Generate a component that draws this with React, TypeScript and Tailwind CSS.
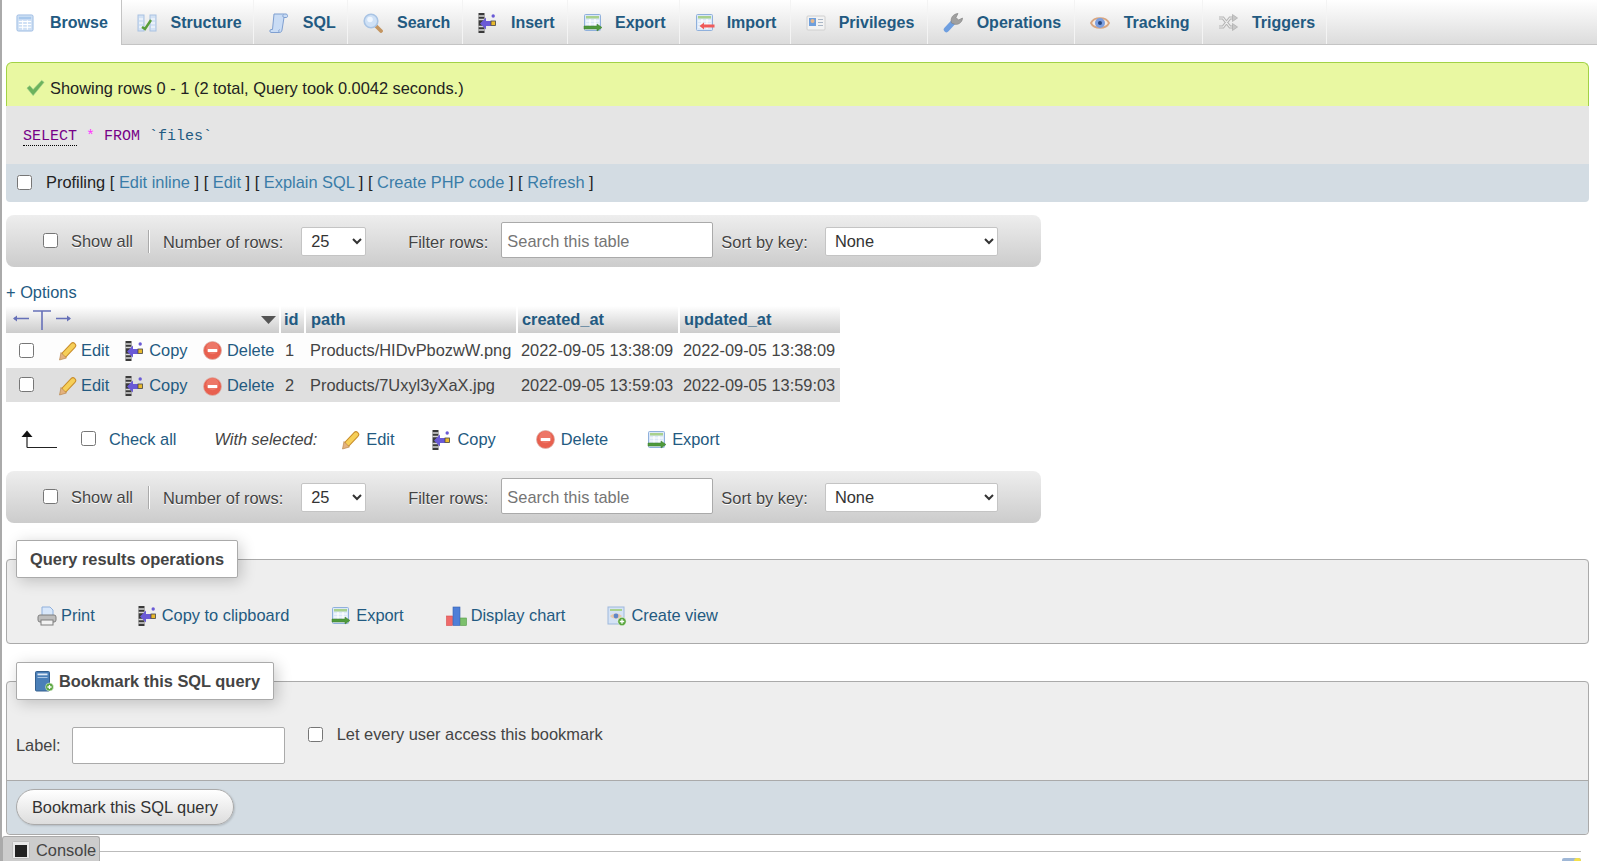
import React from "react";

type IP = { className?: string };

const TableBase = () => (
  <>
    <rect x="1.5" y="1.5" width="16" height="16" rx="1" fill="#dbe8f8" stroke="#8fb0dc" />
    <rect x="3" y="3" width="13" height="2.5" fill="#a9d18e" />
    <path d="M3 8h13M3 11h13M3 14h13M7 6v10M12 6v10" stroke="#fff" strokeWidth="1.2" />
  </>
);
const BrowseIcon = ({ className }: IP) => (
  <svg viewBox="0 0 19 19" className={className}>
    <rect x="1" y="1" width="17" height="17" rx="1.5" fill="#cfe0f5" stroke="#9dbbe2" />
    <rect x="3" y="3" width="13" height="2.5" fill="#a8c8ec" />
    <path d="M3 8h13M3 11h13M3 14h13M7 6.5v10M12 6.5v10" stroke="#fff" strokeWidth="1.1" />
  </svg>
);
const StructureIcon = ({ className }: IP) => (
  <svg viewBox="0 0 20 20" className={className}>
    <rect x="1" y="2" width="6" height="16" fill="#d3e2f4" stroke="#a9c2e2" />
    <rect x="13" y="2" width="6" height="16" fill="#d3e2f4" stroke="#a9c2e2" />
    <path d="M2 6h4M2 10h4M2 14h4M14 6h4M14 10h4M14 14h4" stroke="#fff" />
    <path d="M5 14l3 2 6-9" fill="none" stroke="#5a9e3a" strokeWidth="2.4" />
  </svg>
);
const SqlIcon = ({ className }: IP) => (
  <svg viewBox="0 0 20 20" className={className}>
    <path d="M5 1h12c2 0 2 3.500.5 3.500H15L13 17c-.3 1.500-1 2.500-2.500 2.500H2c-1.500 0-1.500-3 0-3h1.500z" fill="#c9dcf5" stroke="#7f9fd0" />
    <path d="M14.500 1.500c-1 1-1 2.500.5 3M10.500 16.500c-1 .8-1 2 0 3" fill="none" stroke="#7f9fd0" />
  </svg>
);
const SearchIcon = ({ className }: IP) => (
  <svg viewBox="0 0 20 20" className={className}>
    <path d="M12 12l6 6" stroke="#c49560" strokeWidth="3.800" strokeLinecap="round" />
    <circle cx="8" cy="8" r="6.800" fill="#cfe1f6" stroke="#a9c4e4" strokeWidth="1.600" />
    <circle cx="7" cy="6.500" r="2.800" fill="#f0f7ff" />
  </svg>
);
const CopyIcon = ({ className }: IP) => (
  <svg viewBox="0 0 18 20" className={className}>
    <rect x="0.500" y="0" width="6" height="20" fill="#3a3a3a" />
    <path d="M0.500 3h6M0.500 6.500h6M0.500 13.500h6M0.500 17h6" stroke="#d6d6d6" strokeWidth="1.300" />
    <path d="M2 10.500l6-6v3.500h5v5H8v3.500z" fill="#6a5ad6" />
    <rect x="13" y="8" width="4.500" height="4.500" fill="#e9b92c" stroke="#444" strokeWidth=".8" />
    <circle cx="15.200" cy="3" r="1.700" fill="#6a5ad6" />
  </svg>
);
const ExportIcon = ({ className }: IP) => (
  <svg viewBox="0 0 20 20" className={className}>
    <TableBase />
    <path d="M1 13h13v-2l5 3.500-5 3.500v-2H1z" fill="#4f9a3c" stroke="#3c7d2c" strokeWidth=".5" />
  </svg>
);
const ImportIcon = ({ className }: IP) => (
  <svg viewBox="0 0 20 20" className={className}>
    <TableBase />
    <path d="M19.500 11.500H9v-2l-4.500 3.500L9 16.500v-2h10.500z" fill="#ef5b5b" />
  </svg>
);
const PrivilegesIcon = ({ className }: IP) => (
  <svg viewBox="0 0 20 20" className={className}>
    <rect x="1" y="3" width="18" height="14" rx="1" fill="#f3f3f3" stroke="#d0d0d0" />
    <rect x="3" y="5" width="7" height="8" fill="#6f9fdc" />
    <circle cx="6.500" cy="8" r="2" fill="#e8b98c" />
    <path d="M12 6.500h5M12 9.500h5M12 12.500h5" stroke="#a9b6c6" strokeWidth="1.200" />
  </svg>
);
const OperationsIcon = ({ className }: IP) => (
  <svg viewBox="0 0 20 20" className={className}>
    <path d="M3.500 16.500L10 9.500" stroke="#6f9fe0" strokeWidth="5.500" strokeLinecap="round" />
    <path d="M8.500 10C7 5 10 1 15 .5L13 4.500 15.500 7 19.500 5C19.500 10 14 12.500 11 11z" fill="#a0a0a0" stroke="#808080" strokeWidth=".6" />
  </svg>
);
const EyeIcon = ({ className }: IP) => (
  <svg viewBox="0 0 20 20" className={className}>
    <path d="M1 10C4 3.500 16 3.500 19 10 16 16.500 4 16.500 1 10z" fill="#f8ebe0" stroke="#d9a67f" strokeWidth="1.800" />
    <circle cx="10" cy="10" r="5" fill="#7c9fe0" />
    <circle cx="10" cy="10" r="2" fill="#27457c" />
  </svg>
);
const TriggersIcon = ({ className }: IP) => (
  <svg viewBox="0 0 20 20" className={className}>
    <path d="M1 5h4l7 9h3M1 14h4l7-9h3" fill="none" stroke="#b4b4b4" strokeWidth="3.200" />
    <path d="M1 5h4l7 9h3M1 14h4l7-9h3" fill="none" stroke="#efefef" strokeWidth="1.200" />
    <path d="M14.500 1.500l5 3.500-5 3.500zM14.500 10.500l5 3.500-5 3.500z" fill="#c8c8c8" stroke="#a4a4a4" strokeWidth=".6" />
  </svg>
);
const EditIcon = ({ className }: IP) => (
  <svg viewBox="0 0 20 20" className={className}>
    <path d="M6.500 13.500L15 4.500" stroke="#c98e2c" strokeWidth="6.400" strokeLinecap="round" />
    <path d="M6.500 13.500L15 4.500" stroke="#f6cf58" strokeWidth="4.400" strokeLinecap="round" />
    <path d="M1.500 19L3 11.500 8.500 17z" fill="#e3b27f" stroke="#b27c3c" strokeWidth=".6" />
  </svg>
);
const DeleteIcon = ({ className }: IP) => (
  <svg viewBox="0 0 20 20" className={className}>
    <circle cx="10" cy="10" r="9.500" fill="#e8604f" stroke="#dcb4ac" strokeWidth=".8" />
    <circle cx="10" cy="7.500" r="6.500" fill="#f08a7c" opacity=".55" />
    <rect x="5" y="8.300" width="10" height="3.400" rx=".5" fill="#fff" />
  </svg>
);
const CheckIcon = ({ className }: IP) => (
  <svg viewBox="0 0 20 18" className={className}>
    <path d="M1 9l3-2.500 3.500 4L16.500 1 19 3 7.500 17z" fill="#6cb35c" stroke="#93c888" strokeWidth=".6" />
  </svg>
);
const PrintIcon = ({ className }: IP) => (
  <svg viewBox="0 0 20 20" className={className}>
    <path d="M5 1h8l3 3v6H5z" fill="#d8e7fa" stroke="#8fb0dc" />
    <rect x="1" y="9" width="18" height="7" rx="2" fill="#bdbdbd" stroke="#7f7f7f" />
    <rect x="4" y="14" width="12" height="5" fill="#f2f2f2" stroke="#7f7f7f" />
  </svg>
);
const ChartIcon = ({ className }: IP) => (
  <svg viewBox="0 0 21 20" className={className}>
    <rect x="0.500" y="10" width="6" height="9.500" fill="#ef6a6a" stroke="#d84c4c" strokeWidth=".6" />
    <rect x="7" y="1" width="7" height="18.500" fill="#4e7fd8" stroke="#355fb0" strokeWidth=".6" />
    <rect x="14.500" y="12" width="6" height="7.500" fill="#7cc06c" stroke="#549a46" strokeWidth=".6" />
  </svg>
);
const ViewIcon = ({ className }: IP) => (
  <svg viewBox="0 0 20 20" className={className}>
    <rect x="1" y="1" width="16" height="17" fill="#d5e3f5" stroke="#9db8dc" />
    <rect x="3" y="3" width="12" height="2" fill="#a9d18e" />
    <path d="M3 10c3-3.500 9-3.500 12 0-3 3.500-9 3.500-12 0z" fill="#e6c9ac" />
    <circle cx="9" cy="10" r="2.400" fill="#5f86c8" />
    <circle cx="15" cy="15.500" r="4.200" fill="#5aa63f" stroke="#fff" strokeWidth=".5" />
    <path d="M12.800 15.500h4.400M15 13.300v4.400" stroke="#fff" strokeWidth="1.300" />
  </svg>
);
const BookmarkIcon = ({ className }: IP) => (
  <svg viewBox="0 0 19 21" className={className}>
    <rect x="0.500" y="0.500" width="14" height="19.500" rx="1" fill="#4a7fb8" stroke="#35608f" />
    <rect x="2.500" y="2.500" width="10" height="1.800" fill="#dfeaf6" />
    <rect x="2.500" y="6" width="10" height="1" fill="#a9c6e4" />
    <circle cx="14.500" cy="16" r="4" fill="#5aa63f" stroke="#fff" strokeWidth=".5" />
    <path d="M12.400 16h4.200M14.500 13.900v4.200" stroke="#fff" strokeWidth="1.300" />
  </svg>
);
const ConsoleIcon = ({ className }: IP) => (
  <svg viewBox="0 0 18 18" className={className}>
    <rect x="0.500" y="0.500" width="17" height="17" rx="1" fill="#e9e9e9" stroke="#bdbdbd" />
    <rect x="3" y="4" width="12" height="12" fill="#222" />
  </svg>
);
const ArrowUpIcon = ({ className }: IP) => (
  <svg viewBox="0 0 36 18" className={className}>
    <path d="M6 17.500V5M6 17.500h30" fill="none" stroke="#222" strokeWidth="1.200" />
    <path d="M0.500 7L6 0.500 11.500 7z" fill="#111" />
  </svg>
);
const ColumnsIcon = ({ className }: IP) => (
  <svg viewBox="0 0 58 20" className={className}>
    <path d="M1 8.500h15M43 8.500h14M20 1h18M29 1v19" fill="none" stroke="#6670b8" strokeWidth="1.600" />
    <path d="M0 8.500L4 5.500v6zM58 8.500l-4-3v6z" fill="#6670b8" />
  </svg>
);

const tabs = [
  { n: "Browse", I: BrowseIcon, c: "w-[18px] h-[18px]", w: "w-[119.5px]", g: "ml-[14px]" },
  { n: "Structure", I: StructureIcon, c: "w-[20px] h-[20px]", w: "w-[132.3px]", g: "ml-[14px]" },
  { n: "SQL", I: SqlIcon, c: "w-[20px] h-[20px]", w: "w-[94.2px]", g: "ml-[14px]" },
  { n: "Search", I: SearchIcon, c: "w-[20px] h-[20px]", w: "w-[115px]", g: "ml-[14px]" },
  { n: "Insert", I: CopyIcon, c: "w-[18px] h-[20px]", w: "w-[105px]", g: "ml-[13px]" },
  { n: "Export", I: ExportIcon, c: "w-[20px] h-[20px]", w: "w-[111.7px]", g: "ml-[12px]" },
  { n: "Import", I: ImportIcon, c: "w-[20px] h-[20px]", w: "w-[111px]", g: "ml-[12px]" },
  { n: "Privileges", I: PrivilegesIcon, c: "w-[20px] h-[20px]", w: "w-[137px]", g: "ml-[13px]" },
  { n: "Operations", I: OperationsIcon, c: "w-[20px] h-[20px]", w: "w-[147px]", g: "ml-[14px]" },
  { n: "Tracking", I: EyeIcon, c: "w-[20px] h-[20px]", w: "w-[128.3px]", g: "ml-[14px]" },
  { n: "Triggers", I: TriggersIcon, c: "w-[20px] h-[20px]", w: "w-[124.5px]", g: "ml-[14px]" },
];

const TabBar = () => (
  <div className="flex h-[45px] border-b border-[#c4c4c4] bg-gradient-to-b from-[#ffffff] to-[#dcdcdc] text-[16px]">
    {tabs.map((t, i) => (
      <div
        key={t.n}
        className={
          (i === 0
            ? "flex h-[45px] items-center border-r border-[#c4c4c4] bg-white pl-[14px] font-bold text-[#235a81] "
            : "flex items-center border-r border-r-[#f4f4f4] pl-[15px] pt-[1px] font-bold text-[#235a81] ") + t.w
        }
      >
        <span className="flex w-[20px] items-center justify-start">
          <t.I className={t.c} />
        </span>
        <span className={t.g}>{t.n}</span>
      </div>
    ))}
  </div>
);

const Nav = () => (
  <div className="flex h-[52px] w-[1035px] items-center rounded-[8px] bg-gradient-to-b from-[#eeeeee] to-[#cccccc] pl-[37px] [text-shadow:0_1px_0_#fff]">
    <input type="checkbox" className="h-[15px] w-[15px] -translate-y-[1px]" />
    <span className="ml-[13px]">Show all</span>
    <span className="ml-[15px] h-[23px] w-[2px] border-r border-r-white bg-[#aaa]" />
    <span className="ml-[13px] translate-y-[1px]">Number of rows:</span>
    <select className="ml-[18px] h-[29px] w-[65px] rounded-[2px] border border-[#c4c4c4] bg-white pl-[5px] text-[#333]">
      <option>25</option>
    </select>
    <span className="ml-[42px] translate-y-[1px]">Filter rows:</span>
    <input
      placeholder="Search this table"
      className="ml-[13px] h-[36px] w-[212px] -translate-y-[1px] rounded-[2px] border border-[#aaa] bg-white px-[5px] pt-[2px] placeholder:text-[#757575]"
    />
    <span className="ml-[8px] translate-y-[1px]">Sort by key:</span>
    <select className="ml-[17px] h-[29px] w-[173px] rounded-[2px] border border-[#c4c4c4] bg-white pl-[5px] text-[#333]">
      <option>None</option>
    </select>
  </div>
);

const Row = ({ n, path, ts, alt }: { n: string; path: string; ts: string; alt?: boolean }) => (
  <tr className={alt ? "h-[34px] bg-[#dfdfdf]" : "h-[35px] bg-[#fdfdfd] [&>td]:pb-[2px]"}>
    <td className="p-0">
      <div className="flex items-center pl-[13px] text-[#235a81]">
        <input type="checkbox" className={alt ? "h-[15px] w-[15px] -translate-y-[1px]" : "h-[15px] w-[15px] translate-y-[1px]"} />
        <EditIcon className="ml-[24px] h-[20px] w-[20px] translate-y-[1px]" />
        <a className="ml-[3px]">Edit</a>
        <CopyIcon className="ml-[16px] h-[20px] w-[18px] translate-y-[1px]" />
        <a className="ml-[6px]">Copy</a>
        <DeleteIcon className="ml-[15.5px] h-[19px] w-[19px] translate-y-[1px]" />
        <a className="ml-[5px]">Delete</a>
      </div>
    </td>
    <td className="p-0 pl-[5px]">{n}</td>
    <td className="p-0 pl-[5px] whitespace-nowrap">{path}</td>
    <td className="p-0 pl-[4px] whitespace-nowrap">{ts}</td>
    <td className="p-0 pl-[4px] whitespace-nowrap">{ts}</td>
  </tr>
);

const thCls =
  "h-[27px] border-r-2 border-r-white bg-gradient-to-b from-[#ffffff] to-[#cccccc] p-0 pb-[2px] pl-[4px] text-left font-bold text-[#235a81]";

const ResultTable = () => (
  <table className="w-[834px] table-fixed border-collapse">
    <colgroup>
      <col className="w-[274px]" />
      <col className="w-[25px]" />
      <col className="w-[212px]" />
      <col className="w-[162px]" />
      <col className="w-[161px]" />
    </colgroup>
    <thead>
      <tr>
        <th className={thCls + " !pl-0"}>
          <div className="flex translate-y-[1px] items-center justify-between pl-[7px] pr-[3px]">
            <ColumnsIcon className="h-[20px] w-[58px]" />
            <svg viewBox="0 0 15 8" className="h-[8px] w-[15px]">
              <path d="M0 0h15L7.500 8z" fill="#555" />
            </svg>
          </div>
        </th>
        <th className={thCls + " !pl-[3px]"}>id</th>
        <th className={thCls + " !pl-[5px]"}>path</th>
        <th className={thCls}>created_at</th>
        <th className="h-[27px] bg-gradient-to-b from-[#ffffff] to-[#cccccc] p-0 pb-[2px] pl-[4px] text-left font-bold text-[#235a81]">updated_at</th>
      </tr>
    </thead>
    <tbody>
      <Row n="1" path="Products/HIDvPbozwW.png" ts="2022-09-05 13:38:09" />
      <Row n="2" path="Products/7Uxyl3yXaX.jpg" ts="2022-09-05 13:59:03" alt />
    </tbody>
  </table>
);

const BulkRow = () => (
  <div className="flex h-[69px] items-center pt-[4px] pl-[15px] text-[#235a81]">
    <ArrowUpIcon className="h-[18px] w-[36px]" />
    <input type="checkbox" className="ml-[24px] h-[15px] w-[15px]" />
    <a className="ml-[13px]">Check all</a>
    <i className="ml-[38px] text-[#444]">With selected:</i>
    <EditIcon className="ml-[24px] h-[20px] w-[20px] translate-y-[1px]" />
    <a className="ml-[5px]">Edit</a>
    <CopyIcon className="ml-[38px] h-[20px] w-[18px] translate-y-[1px]" />
    <a className="ml-[7px]">Copy</a>
    <DeleteIcon className="ml-[40px] h-[19px] w-[19px] translate-y-[1px]" />
    <a className="ml-[6px]">Delete</a>
    <ExportIcon className="ml-[39px] h-[20px] w-[20px] translate-y-[1px]" />
    <a className="ml-[5px]">Export</a>
  </div>
);

const legendCls =
  "ml-[9px] flex h-[38px] items-center rounded-[2px] border border-[#aaa] bg-white font-bold text-[#444] shadow-[3px_3px_15px_rgba(0,0,0,0.2)]";

const Operations = () => (
  <fieldset className="mt-[17px] h-[104px] rounded-[4px] border border-[#aaa] bg-[#eeeeee]">
    <legend className={legendCls + " px-[13px]"}>Query results operations</legend>
    <div className="flex h-[66px] items-center pl-[30px] pt-[8px] text-[#235a81]">
      <PrintIcon className="h-[20px] w-[20px] translate-y-[1px]" />
      <a className="ml-[4px]">Print</a>
      <CopyIcon className="ml-[43px] h-[20px] w-[18px] translate-y-[1px]" />
      <a className="ml-[6px]">Copy to clipboard</a>
      <ExportIcon className="ml-[42px] h-[20px] w-[20px] translate-y-[1px]" />
      <a className="ml-[5px]">Export</a>
      <ChartIcon className="ml-[42px] h-[20px] w-[21px] translate-y-[1px]" />
      <a className="ml-[4px]">Display chart</a>
      <ViewIcon className="ml-[42px] h-[20px] w-[20px] translate-y-[1px]" />
      <a className="ml-[4px]">Create view</a>
    </div>
  </fieldset>
);

const Bookmark = () => (
  <fieldset className="mt-[18px] h-[173px] rounded-[4px] border border-[#aaa] bg-[#eeeeee]">
    <legend className={legendCls + " pl-[18px] pr-[13px]"}>
      <BookmarkIcon className="h-[21px] w-[19px]" />
      <span className="ml-[5px]">Bookmark this SQL query</span>
    </legend>
    <div className="flex h-[80px] items-start pl-[9px] pt-[27px]">
      <span className="mt-[8px]">Label:</span>
      <input className="ml-[11px] h-[37px] w-[213px] rounded-[2px] border border-[#aaa] bg-white" />
      <input type="checkbox" className="ml-[23px] mt-[0px] h-[15px] w-[15px]" />
      <span className="ml-[14px] -mt-[3px]">Let every user access this bookmark</span>
    </div>
    <div className="flex h-[54px] items-center rounded-b-[4px] border-t border-[#aaa] bg-[#d3dce3] pb-[2px] pl-[9px]">
      <button className="h-[36px] w-[218px] rounded-full border border-[#aaa] bg-gradient-to-b from-[#ffffff] to-[#dddddd] text-[#333] shadow-[1px_1px_2px_rgba(0,0,0,0.15)]">
        Bookmark this SQL query
      </button>
    </div>
  </fieldset>
);

const ConsoleBar = () => (
  <div className="absolute bottom-0 left-0 flex h-[25px] w-full items-start">
    <div className="flex h-[25px] w-[98px] items-center rounded-t-[3px] border border-b-0 border-[#aaa] bg-[#cccccc] pl-[9px] pt-[2px] text-[#444]">
      <ConsoleIcon className="h-[18px] w-[18px]" />
      <span className="ml-[6px]">Console</span>
    </div>
    <div className="mt-[15px] h-[1px] w-[1481px] bg-[#bbbbbb]" />
    <div className="absolute bottom-0 right-[16px] h-[3px] w-[19px] rounded-t-[2px] bg-[#9fb7d6]">
      <div className="ml-auto h-[3px] w-[7px] rounded-t-[3px] bg-[#f4e04a]" />
    </div>
  </div>
);

export default function App() {
  return (
    <div className="relative h-[861px] w-[1597px] overflow-hidden border-l-2 border-l-[#aaaaaa] bg-white font-['Liberation_Sans',Arial,sans-serif] text-[16.4px] leading-[20px] text-[#444]">
      <TabBar />
      <div className="ml-[4px] mr-[8px]">
        <div className="mt-[17px] flex h-[44px] items-center rounded-t-[6px] border-l border-r border-t border-[#a2d246] bg-[#e9f8a2] pl-[19px] pt-[7px] text-[#222]">
          <CheckIcon className="h-[18px] w-[19px]" />
          <span className="ml-[5px]">Showing rows 0 - 1 (2 total, Query took 0.0042 seconds.)</span>
        </div>
        <div className="flex h-[58px] items-center bg-[#e5e5e5] pt-[4px] pl-[17px] font-['Liberation_Mono',monospace] text-[15px]">
          <span className="border-b border-dotted border-black leading-[17px] text-[#770088]">SELECT</span>
          <span className="ml-[9px] text-[#ff33ff]">*</span>
          <span className="ml-[9px] text-[#770088]">FROM</span>
          <span className="ml-[9px] text-[#235a81]">`files`</span>
        </div>
        <div className="flex h-[38px] items-center rounded-b-[4px] bg-[#d3dce3] pb-[2px] pl-[11px] text-[#222]">
          <input type="checkbox" className="h-[15px] w-[15px]" />
          <span className="ml-[14px]">
            Profiling [ <a className="text-[#3a7ca8]">Edit inline</a> ] [ <a className="text-[#3a7ca8]">Edit</a> ] [{" "}
            <a className="text-[#3a7ca8]">Explain SQL</a> ] [ <a className="text-[#3a7ca8]">Create PHP code</a> ] [{" "}
            <a className="text-[#3a7ca8]">Refresh</a> ]
          </span>
        </div>
        <div className="mt-[13px]">
          <Nav />
        </div>
        <div className="flex h-[39px] items-center pt-[11px] text-[#235a81]">+ Options</div>
        <ResultTable />
        <BulkRow />
        <Nav />
        <Operations />
        <Bookmark />
      </div>
      <ConsoleBar />
    </div>
  );
}
